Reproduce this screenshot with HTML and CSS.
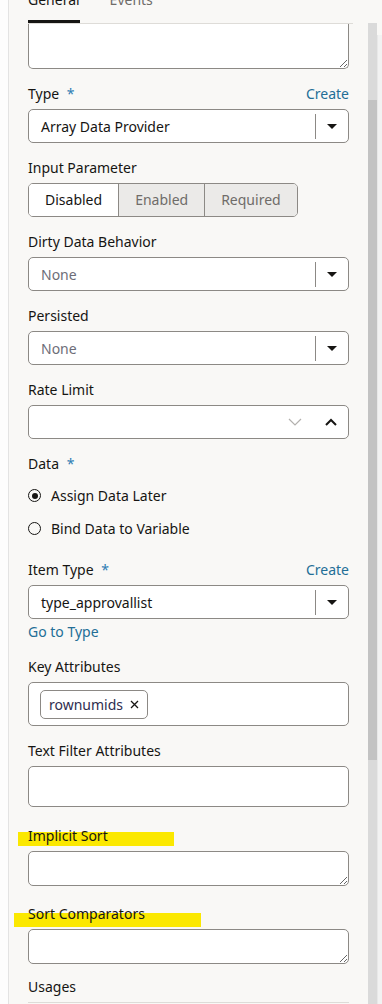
FILE: index.html
```html
<!DOCTYPE html>
<html lang="en">

<head>
    <meta charset="UTF-8">
    <meta name="viewport" content="width=device-width, initial-scale=1.0">
    <title>Variable Properties</title>
    <link rel="stylesheet" href="styles.css">
</head>

<body>

    <div class="page">
        <div class="gutter"></div>

        <div class="panel">
            <!-- tab strip, scrolled partly out of view -->
            <div class="tabs">
                <span class="tab active">General</span>
                <span class="tab">Events</span>
            </div>

            <div class="form">
                <textarea class="area first"></textarea>

                <div class="field">
                    <div class="label-row">
                        <label>Type <span class="req">*</span></label>
                        <a class="link">Create</a>
                    </div>
                    <div class="select">
                        <span class="value">Array Data Provider</span>
                        <span class="arrow-box"><span class="arrow"></span></span>
                    </div>
                </div>

                <div class="field">
                    <div class="label-row"><label>Input Parameter</label></div>
                    <div class="seg">
                        <span class="seg-btn on">Disabled</span>
                        <span class="seg-btn">Enabled</span>
                        <span class="seg-btn">Required</span>
                    </div>
                </div>

                <div class="field">
                    <div class="label-row"><label>Dirty Data Behavior</label></div>
                    <div class="select">
                        <span class="value placeholder">None</span>
                        <span class="arrow-box"><span class="arrow"></span></span>
                    </div>
                </div>

                <div class="field">
                    <div class="label-row"><label>Persisted</label></div>
                    <div class="select">
                        <span class="value placeholder">None</span>
                        <span class="arrow-box"><span class="arrow"></span></span>
                    </div>
                </div>

                <div class="field">
                    <div class="label-row"><label>Rate Limit</label></div>
                    <div class="select">
                        <span class="value"></span>
                        <svg class="chev-down" width="14" height="8" viewBox="0 0 14 8">
                            <path d="M1 1 L7 7 L13 1" fill="none" stroke="#b3b1ae" stroke-width="1.2" />
                        </svg>
                        <svg class="chev-up" width="12" height="8" viewBox="0 0 12 8">
                            <path d="M1 7 L6 2 L11 7" fill="none" stroke="#161513" stroke-width="2" />
                        </svg>
                    </div>
                </div>

                <div class="field">
                    <div class="label-row"><label>Data <span class="req">*</span></label></div>
                    <div class="radios">
                        <div class="radio"><span class="dot on"></span>Assign Data Later</div>
                        <div class="radio"><span class="dot"></span>Bind Data to Variable</div>
                    </div>
                </div>

                <div class="field">
                    <div class="label-row">
                        <label>Item Type <span class="req">*</span></label>
                        <a class="link">Create</a>
                    </div>
                    <div class="select">
                        <span class="value">type_approvallist</span>
                        <span class="arrow-box"><span class="arrow"></span></span>
                    </div>
                    <a class="link below">Go to Type</a>
                </div>

                <div class="field">
                    <div class="label-row"><label>Key Attributes</label></div>
                    <div class="tags">
                        <span class="chip">rownumids
                            <svg width="9" height="9" viewBox="0 0 9 9">
                                <path d="M1 1 L8 8 M8 1 L1 8" stroke="#161513" stroke-width="1.3" />
                            </svg>
                        </span>
                    </div>
                </div>

                <div class="field">
                    <div class="label-row"><label>Text Filter Attributes</label></div>
                    <div class="plain"></div>
                </div>

                <div class="field implicit">
                    <div class="label-row">
                        <label class="marked">Implicit Sort<span class="mark mark-one"></span></label>
                    </div>
                    <textarea class="area"></textarea>
                </div>

                <div class="field comparators">
                    <div class="label-row">
                        <label class="marked">Sort Comparators<span class="mark mark-two"></span></label>
                    </div>
                    <textarea class="area"></textarea>
                </div>

                <div class="field usages">
                    <div class="label-row"><label>Usages</label></div>
                    <div class="next-box"></div>
                </div>
            </div>
        </div>

        <div class="track">
            <div class="thumb"></div>
        </div>
        <div class="edge"></div>
    </div>

</body>

</html>
```

FILE: styles.css
```css
body {
    margin: 0;
    font-family: "Noto Sans", "Open Sans", sans-serif;
    font-size: 14px;
    color: #161513;
    background-color: #f9f8f6;
    overflow: hidden;
}

.page {
    display: flex;
    height: 1004px;
    overflow: hidden;
    background-color: #f9f8f6;
}

.gutter {
    width: 8px;
    background-color: #fdfdfd;
    border-right: 1px solid #e3e3e3;
}

.panel {
    width: 321px;
    padding: 0 19px;
    background-color: #f9f8f6;
}

/* tabs */
.tabs {
    display: flex;
    gap: 30px;
    margin: -10px -4px 0 0;
    line-height: 20px;
    border-bottom: 1px solid #dedcd8;
}

.tab {
    padding-bottom: 10px;
    border-bottom: 3px solid transparent;
    color: #6f6c69;
}

.tab.active {
    color: #161513;
    border-bottom-color: #161513;
}

/* fields */
.field {
    margin-top: 13px;
}

.field.implicit {
    margin-top: 17px;
}

.field.comparators {
    margin-top: 16px;
}

.field.usages {
    margin-top: 11px;
}

.label-row {
    display: flex;
    justify-content: space-between;
    line-height: 20px;
    padding-top: 2px;
    margin-bottom: 5px;
}

.req {
    color: #2f7db3;
    margin-left: 4px;
}

.link {
    color: #236e96;
    cursor: pointer;
}

.link.below {
    display: block;
    margin-top: 3px;
    line-height: 20px;
}

.area {
    display: block;
    width: 100%;
    height: 35px;
    box-sizing: border-box;
    margin: 0;
    border: 1px solid #8c8985;
    border-radius: 5px;
    background-color: #ffffff;
    resize: vertical;
    font: inherit;
}

.area.first {
    height: 45px;
    border-top: none;
    border-radius: 0 0 5px 5px;
}

.select {
    display: flex;
    align-items: center;
    height: 34px;
    box-sizing: border-box;
    border: 1px solid #8c8985;
    border-radius: 5px;
    background-color: #ffffff;
}

.select .value {
    flex: 1;
    padding-left: 12px;
}

.select .placeholder {
    color: #6d6d78;
}

.arrow-box {
    display: flex;
    align-items: center;
    justify-content: center;
    width: 32px;
    height: 25px;
    border-left: 1px solid #8c8985;
}

.arrow {
    width: 0;
    height: 0;
    border-left: 5px solid transparent;
    border-right: 5px solid transparent;
    border-top: 5px solid #161513;
}

.chev-down {
    margin-right: 23px;
}

.chev-up {
    margin-right: 11px;
}

/* segmented buttons */
.seg {
    display: inline-flex;
    height: 34px;
    box-sizing: border-box;
    border: 1px solid #8c8985;
    border-radius: 5px;
    overflow: hidden;
}

.seg-btn {
    padding: 0 16px;
    line-height: 32px;
    background-color: #ebeae8;
    color: #6f6c69;
    border-left: 1px solid #8c8985;
}

.seg-btn:first-child {
    border-left: none;
}

.seg-btn.on {
    background-color: #ffffff;
    color: #161513;
}

/* radios */
.radio {
    display: flex;
    align-items: center;
    gap: 10px;
    height: 33px;
}

.dot {
    display: flex;
    align-items: center;
    justify-content: center;
    width: 13px;
    height: 13px;
    box-sizing: border-box;
    border: 1.5px solid #161513;
    border-radius: 50%;
}

.dot.on::after {
    content: "";
    width: 6px;
    height: 6px;
    border-radius: 50%;
    background-color: #161513;
}

/* key attributes */
.tags {
    display: flex;
    align-items: flex-start;
    min-height: 44px;
    box-sizing: border-box;
    padding: 7px 11px 6px;
    border: 1px solid #8c8985;
    border-radius: 5px;
    background-color: #ffffff;
}

.chip {
    display: inline-flex;
    align-items: center;
    gap: 7px;
    padding: 0 8px;
    line-height: 27px;
    border: 1px solid #8c8985;
    border-radius: 5px;
    color: #2e2d4f;
}

.plain {
    height: 41px;
    box-sizing: border-box;
    border: 1px solid #8c8985;
    border-radius: 5px;
    background-color: #ffffff;
}

.next-box {
    height: 20px;
    border-top: 1px solid #dedcd8;
}

/* yellow marker strokes over two labels */
.marked {
    position: relative;
    z-index: 0;
}

.mark {
    position: absolute;
    z-index: -1;
    height: 14px;
    background-color: #fbe800;
}

.mark-one {
    left: -10px;
    top: 6px;
    width: 156px;
}

.mark-two {
    left: -14px;
    top: 9px;
    width: 187px;
}

/* scrollbar */
.track {
    width: 9px;
    margin-top: 23px;
    background-color: #dadada;
}

.thumb {
    margin-top: 77px;
    height: 660px;
    background-color: #c3c3c3;
}

.edge {
    width: 4px;
    margin-top: 35px;
    border-left: 1px solid #e8e8e8;
    background-color: #f2f2f2;
}
```
